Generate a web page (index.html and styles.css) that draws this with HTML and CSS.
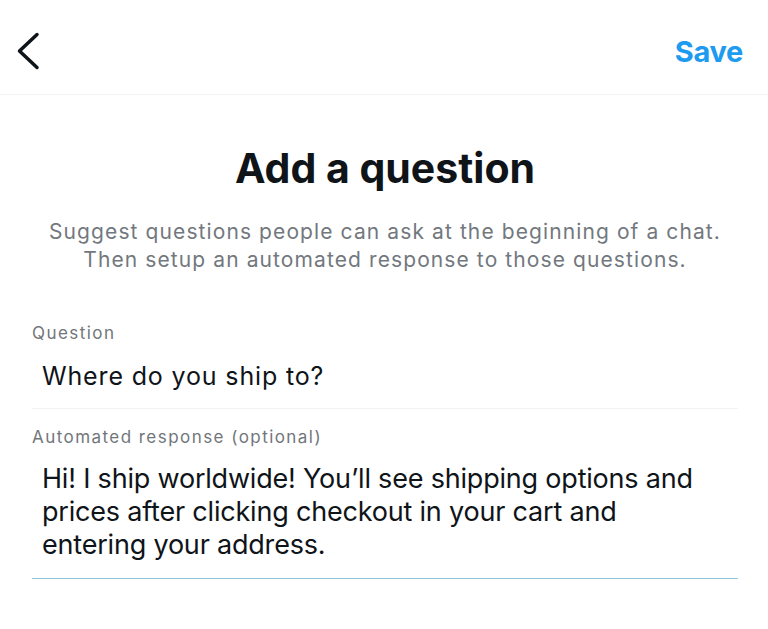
FILE: index.html
```html
<!DOCTYPE html>
<html lang="en">
<head>
<meta charset="utf-8">
<title>Add a question</title>
<link rel="stylesheet" href="styles.css">
</head>
<body>
<header class="topbar">
  <button class="back" aria-label="Back">
    <svg width="26" height="40" viewBox="0 0 26 40" aria-hidden="true">
      <path d="M21 3.5 L3.5 20 L21 36.5" fill="none" stroke="#0f1419" stroke-width="3.5" stroke-linecap="round" stroke-linejoin="round"/>
    </svg>
  </button>
  <span class="save">Save</span>
</header>
<main class="content">
  <h1 class="title">Add a question</h1>
  <p class="subtitle">Suggest questions people can ask at the beginning of a chat.<br>Then setup an automated response to those questions.</p>
  <div class="field">
    <div class="label">Question</div>
    <div class="value">Where do you ship to?</div>
  </div>
  <div class="field field-active">
    <div class="label">Automated response (optional)</div>
    <div class="value value-multi">Hi! I ship worldwide! You’ll see shipping options and prices after clicking checkout in your cart and entering your address.</div>
  </div>
</main>
</body>
</html>
```

FILE: styles.css
```css
* { box-sizing: border-box; }
html, body {
  margin: 0;
  padding: 0;
  background: #ffffff;
}
body {
  font-family: Inter, "Noto Sans", "Liberation Sans", sans-serif;
  color: #0f1419;
  width: 768px;
  height: 629px;
  overflow: hidden;
}
.topbar {
  height: 95px;
  display: flex;
  align-items: center;
  justify-content: space-between;
  padding: 8px 25px 0 16px;
  border-bottom: 1px solid #eff3f4;
}
.back {
  border: 0;
  background: none;
  padding: 0;
  margin: 0;
  display: flex;
  width: 26px;
  height: 40px;
}
.save {
  font-size: 29px;
  font-weight: 700;
  color: #1d9bf0;
  letter-spacing: -0.3px;
}
.content {
  padding: 0 30px 0 32px;
}
.title {
  margin: 49px 0 0;
  font-size: 41px;
  line-height: 48px;
  font-weight: 700;
  text-align: center;
  letter-spacing: 0;
}
.subtitle {
  margin: 26px -10px 0 -10px;
  font-size: 21px;
  line-height: 28px;
  color: #72787e;
  text-align: center;
  letter-spacing: 1.1px;
}
.field {
  border-bottom: 1px solid #eff3f4;
  padding-bottom: 17px;
}
.field:first-of-type { margin-top: 48px; }
.field + .field { margin-top: 17px; }
.field-active {
  border-bottom-color: #8cc8da;
}
.label {
  font-size: 17px;
  line-height: 22px;
  color: #71767b;
  letter-spacing: 1.45px;
}
.value {
  margin-top: 17px;
  padding-left: 10px;
  font-size: 25px;
  line-height: 30px;
  color: #0f1419;
  letter-spacing: 0.85px;
}
.value-multi {
  margin-top: 14px;
  font-size: 27px;
  line-height: 33px;
  padding-right: 20px;
  letter-spacing: -0.2px;
}
```
